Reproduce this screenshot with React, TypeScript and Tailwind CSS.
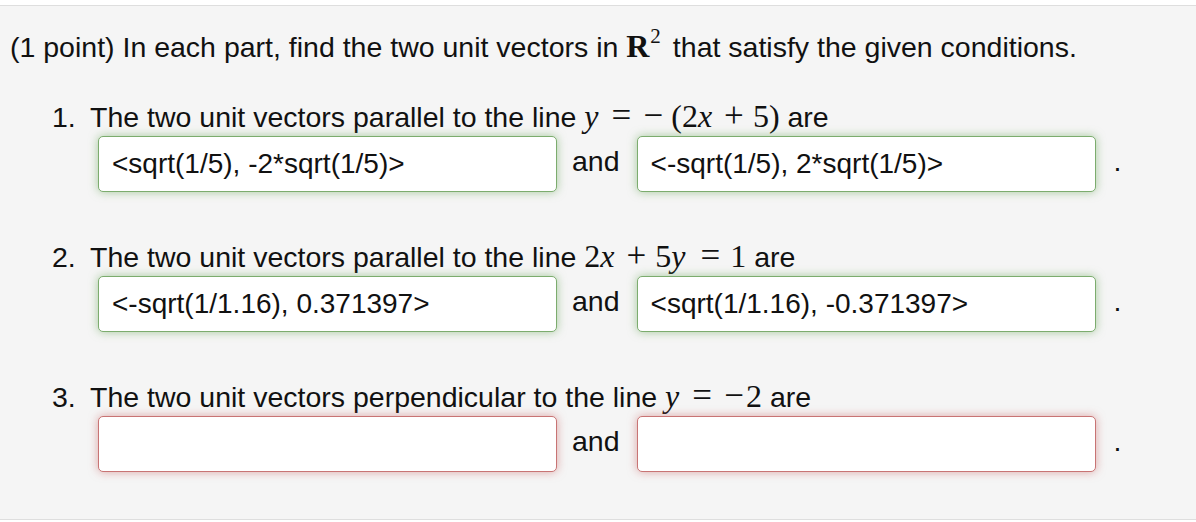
import React from "react";

const sans = { fontFamily: '"Liberation Sans", Arial, Helvetica, sans-serif' };
const serif = { fontFamily: '"Liberation Serif", "Times New Roman", serif' };

function N({ children }: { children: React.ReactNode }) {
  return (
    <span className="text-[32px]" style={serif}>
      {children}
    </span>
  );
}

function V({ children, w = "w-[17px]" }: { children: React.ReactNode; w?: string }) {
  return (
    <span className={`text-[32px] italic inline-block ${w}`} style={serif}>
      {children}
    </span>
  );
}

function Rel({ children }: { children: React.ReactNode }) {
  return (
    <span className="text-[35px] leading-[20px] inline-block w-[24px] text-center mx-[8px]" style={serif}>
      {children}
    </span>
  );
}

function Bin({ children }: { children: React.ReactNode }) {
  return (
    <span className="text-[35px] leading-[20px] inline-block w-[24px] text-center mx-[7px]" style={serif}>
      {children}
    </span>
  );
}

function Un({ children, gap = false }: { children: React.ReactNode; gap?: boolean }) {
  return (
    <span
      className={`text-[35px] leading-[20px] inline-block w-[24px] text-center ${gap ? "mr-[6px]" : ""}`}
      style={serif}
    >
      {children}
    </span>
  );
}

function Field({ value, ok }: { value: string; ok: boolean }) {
  return (
    <div
      className={`w-[459px] h-[56px] shrink-0 bg-white rounded-[5px] border flex items-center pl-[13px] text-[28px] text-[#111] ${
        ok
          ? "border-[#7cac6e] shadow-[0_0_10px_rgba(110,170,95,0.6)]"
          : "border-[#c87474] shadow-[0_0_10px_rgba(205,110,110,0.6)]"
      }`}
    >
      {value}
    </div>
  );
}

function Item({
  n,
  line,
  a,
  b,
  ok,
  last = false,
}: {
  n: string;
  line: React.ReactNode;
  a: string;
  b: string;
  ok: boolean;
  last?: boolean;
}) {
  return (
    <div className={`pl-[52px] ${last ? "" : "mb-[48px]"}`}>
      <div className="h-[32px] leading-[32px] whitespace-nowrap flex items-baseline">
        <span className="w-[38px] shrink-0">{n}</span>
        <span>{line}</span>
      </div>
      <div className="mt-[4px] ml-[46px] flex items-start">
        <Field value={a} ok={ok} />
        <span className="ml-[15px] mt-[9px] leading-[32px]">and</span>
        <div className="ml-[17px]">
          <Field value={b} ok={ok} />
        </div>
        <span className="ml-[18px] mt-[9px] leading-[32px]">.</span>
      </div>
    </div>
  );
}

export default function App() {
  return (
    <div className="w-[1196px] h-[522px] bg-white text-[28.5px] text-[#111]" style={sans}>
      <div className="h-[5px] bg-white" />
      <div className="h-[515px] bg-[#f5f5f5] border-t border-b border-[#dedede] pt-[24px] box-border">
        <div className="h-[32px] leading-[32px] pl-[10px] whitespace-nowrap">
          (1 point) In each part, find the two unit vectors in{" "}
          <span className="font-bold text-[32px]" style={serif}>
            R
          </span>
          <span className="text-[21px] relative -top-[14px] ml-[1px]" style={serif}>
            2
          </span>
          <span className="ml-[12px]">that satisfy the given conditions.</span>
        </div>
        <div className="mt-[38px]">
          <Item
            n="1."
            ok
            a="<sqrt(1/5), -2*sqrt(1/5)>"
            b="<-sqrt(1/5), 2*sqrt(1/5)>"
            line={
              <>
                The two unit vectors parallel to the line <V>y</V>
                <Rel>=</Rel>
                <Un gap>−</Un>
                <N>(2</N>
                <V>x</V>
                <Bin>+</Bin>
                <N>5)</N> are
              </>
            }
          />
          <Item
            n="2."
            ok
            a="<-sqrt(1/1.16), 0.371397>"
            b="<sqrt(1/1.16), -0.371397>"
            line={
              <>
                The two unit vectors parallel to the line <N>2</N>
                <V>x</V>
                <Bin>+</Bin>
                <N>5</N>
                <V w="w-[19px]">y</V>
                <Rel>=</Rel>
                <N>1</N> are
              </>
            }
          />
          <Item
            n="3."
            ok={false}
            last
            a=""
            b=""
            line={
              <>
                The two unit vectors perpendicular to the line <V>y</V>
                <Rel>=</Rel>
                <Un>−</Un>
                <N>2</N> are
              </>
            }
          />
        </div>
      </div>
    </div>
  );
}
